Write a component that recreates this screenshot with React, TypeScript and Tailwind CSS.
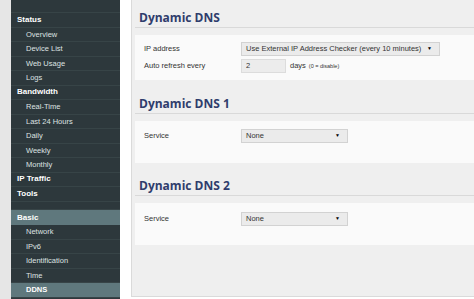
import React from 'react';

const menu = [
  { label: 'Status', head: true },
  { label: 'Overview' },
  { label: 'Device List' },
  { label: 'Web Usage' },
  { label: 'Logs' },
  { label: 'Bandwidth', head: true },
  { label: 'Real-Time' },
  { label: 'Last 24 Hours' },
  { label: 'Daily' },
  { label: 'Weekly' },
  { label: 'Monthly' },
  { label: 'IP Traffic', head: true },
  { label: 'Tools', head: true },
];

const basic = [
  { label: 'Network' },
  { label: 'IPv6' },
  { label: 'Identification' },
  { label: 'Time' },
  { label: 'DDNS', active: true },
];

const MenuRow: React.FC<{ label: string; head?: boolean; active?: boolean }> = ({ label, head, active }) => (
  <div
    className={`h-[14.5px] flex items-center border-b border-[#374447] leading-none ${
      active ? 'bg-[#5f787d]' : ''
    } ${head ? 'pl-[6px] font-bold text-white text-[8px]' : 'pl-[15px] text-[#dde2e2] text-[7.5px]'} ${
      active ? 'font-bold text-white' : ''
    }`}
  >
    {label}
  </div>
);

const Select: React.FC<{ value: string; width: string }> = ({ value, width }) => (
  <div
    className={`${width} h-[14px] bg-[#ebebeb] border border-[#d2d2d2] flex items-center justify-between pl-[4px] pr-[7px] text-[7.5px] text-[#333]`}
  >
    <span>{value}</span>
    <span className="text-[5px] text-black">▼</span>
  </div>
);

const Heading: React.FC<{ title: string; className?: string }> = ({ title, className }) => (
  <div
    className={`h-[19px] border-b border-[#d9d9d9] pl-[4px] leading-[18px] text-[12px] font-bold text-[#2f3d6c] ${className ?? ''}`}
    style={{ fontFamily: '"Open Sans", sans-serif' }}
  >
    {title}
  </div>
);

export default function App() {
  return (
    <div
      className="w-[474px] h-[299px] flex bg-white overflow-hidden"
      style={{ fontFamily: '"Liberation Sans", Arial, sans-serif' }}
    >
      {/* left edge */}
      <div className="w-[11px] h-full bg-[#e6e6e6]" />

      {/* Sidebar */}
      <div className="w-[109px] h-full bg-[#2d383c] flex flex-col">
        <div className="h-[13px] border-b border-[#374447]" />
        {menu.map((m, i) => (
          <MenuRow key={i} label={m.label} head={m.head} />
        ))}
        <div className="h-[8.5px] border-b border-[#374447]" />
        <div className="h-[15px] flex items-center pl-[6px] bg-[#5f787d] text-white font-bold text-[8px] leading-none">
          Basic
        </div>
        {basic.map((m, i) => (
          <MenuRow key={i} label={m.label} active={m.active} />
        ))}
      </div>

      <div className="w-[11px] h-full bg-white" />

      {/* Content */}
      <div className="flex-1 h-[297px] bg-[#efefef] border-l border-b border-[#dadada] pl-[3px] pt-[9px] text-[#333] text-[7.5px]">
        <Heading title="Dynamic DNS" />
        <div className="mt-[7px] h-[45px] bg-[#fafafa] pl-[9px] pt-[7px] flex flex-col gap-[3px]">
          <div className="flex items-center">
            <div className="w-[97px]">IP address</div>
            <Select value="Use External IP Address Checker (every 10 minutes)" width="w-[199px]" />
          </div>
          <div className="flex items-center">
            <div className="w-[97px]">Auto refresh every</div>
            <div className="w-[45px] h-[14px] bg-[#ececec] border border-[#dcdcdc] flex items-center pl-[4px]">2</div>
            <span className="ml-[4px]">days</span>
            <span className="ml-[3px] text-[5.5px]">(0 = disable)</span>
          </div>
        </div>

        <Heading title="Dynamic DNS 1" className="mt-[15px]" />
        <div className="mt-[7px] h-[42px] bg-[#fafafa] pl-[9px] pt-[8px]">
          <div className="flex items-center">
            <div className="w-[97px]">Service</div>
            <Select value="None" width="w-[107px]" />
          </div>
        </div>

        <Heading title="Dynamic DNS 2" className="mt-[14px]" />
        <div className="mt-[7px] h-[42px] bg-[#fafafa] pl-[9px] pt-[9px]">
          <div className="flex items-center">
            <div className="w-[97px]">Service</div>
            <Select value="None" width="w-[107px]" />
          </div>
        </div>
      </div>
    </div>
  );
}
